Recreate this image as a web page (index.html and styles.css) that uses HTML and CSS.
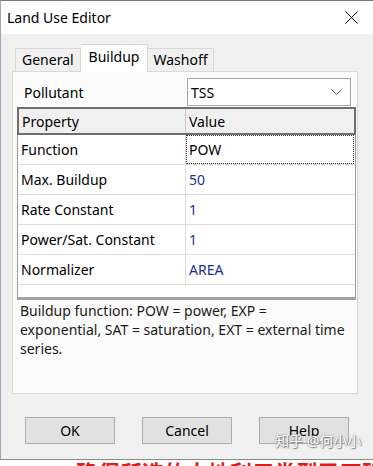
FILE: index.html
```html
<!DOCTYPE html>
<html lang="en">
<head>
  <meta charset="UTF-8" />
  <meta name="viewport" content="width=device-width, initial-scale=1.0"/>
  <title>Land Use Editor</title>
  <link rel="stylesheet" href="styles.css">
</head>
<body>

  <div class="window">
    <div class="titlebar">
      <span class="title">Land Use Editor</span>
      <svg class="close" width="13" height="13" viewBox="0 0 13 13">
        <path d="M0.5 0.5 L12.5 12.5 M12.5 0.5 L0.5 12.5" stroke="#000" stroke-width="1" fill="none"/>
      </svg>
    </div>

    <div class="client">
      <div class="tabs">
        <div class="tab">General</div>
        <div class="tab active">Buildup</div>
        <div class="tab last">Washoff</div>
      </div>

      <div class="panel">
        <div class="pollutant-row">
          <div class="pollutant-label">Pollutant</div>
          <div class="combo">
            <span>TSS</span>
            <svg width="11" height="7" viewBox="0 0 11 7">
              <path d="M0.5 0.5 L5.5 5.5 L10.5 0.5" stroke="#555" stroke-width="1" fill="none"/>
            </svg>
          </div>
        </div>

        <div class="grid">
          <div class="row head">
            <div class="cell">Property</div>
            <div class="cell">Value</div>
          </div>
          <div class="row">
            <div class="cell">Function</div>
            <div class="cell focus">POW</div>
          </div>
          <div class="row">
            <div class="cell">Max. Buildup</div>
            <div class="cell val">50</div>
          </div>
          <div class="row">
            <div class="cell">Rate Constant</div>
            <div class="cell val">1</div>
          </div>
          <div class="row">
            <div class="cell">Power/Sat. Constant</div>
            <div class="cell val">1</div>
          </div>
          <div class="row">
            <div class="cell">Normalizer</div>
            <div class="cell val">AREA</div>
          </div>
          <div class="grid-rest"></div>
        </div>

        <div class="desc">Buildup function: POW = power, EXP = exponential, SAT = saturation, EXT = external time series.</div>
      </div>

      <div class="buttons">
        <button>OK</button>
        <button>Cancel</button>
        <button>Help</button>
        <div class="watermark">知乎 @何小小</div>
      </div>
    </div>
  </div>
  <div class="behind"><span>确保所选的土地利用类型已正确设置</span></div>

</body>
</html>
```

FILE: styles.css
```css
body {
  margin: 0;
  width: 373px;
  height: 466px;
  overflow: hidden;
  background: #fff;
  font-family: "Noto Sans", "Noto Sans CJK SC", sans-serif;
  font-size: 14px;
  color: #000;
}
.window {
  height: 458px;
  border-top: 1px solid #7a7a7a;
  border-left: 1px solid #9aa6b6;
  border-bottom: 1px solid #8a8a8a;
  display: flex;
  flex-direction: column;
  background: #f0f0f0;
}
.titlebar {
  height: 33px;
  background: #fff;
  display: flex;
  align-items: center;
  justify-content: space-between;
  padding: 0 15px 0 6px;
}
.title {
  font-size: 14px;
}
.client {
  flex: 1;
  position: relative;
  padding: 10px 15px 0 11px;
}
.tabs {
  display: flex;
  align-items: flex-end;
  height: 27px;
  padding-left: 3px;
  position: relative;
  z-index: 1;
}
.tab {
  height: 22px;
  line-height: 22px;
  padding: 0 6px;
  border: 1px solid #d9d9d9;
  border-bottom: none;
  background: #f0f0f0;
}
.tab.active {
  height: 27px;
  line-height: 24px;
  padding: 0 8px;
  background: #fff;
  border-left: none;
  margin-bottom: -1px;
}
.tab.last {
  border-left: none;
  padding: 0 5px;
}
.panel {
  height: 316px;
  border: 1px solid #d9d9d9;
  background: #fbfbfb;
  padding: 5px 0 0 4px;
}
.pollutant-row {
  display: flex;
  align-items: center;
  height: 30px;
}
.pollutant-label {
  width: 170px;
  box-sizing: border-box;
  padding-left: 7px;
}
.combo {
  width: 164px;
  height: 28px;
  border: 1px solid #a6a6a6;
  background: #fff;
  display: flex;
  align-items: center;
  justify-content: space-between;
  padding: 0 8px 0 3px;
  box-sizing: border-box;
}
.grid {
  width: 339px;
  box-sizing: border-box;
  background: #fff;
  border: 1px solid #9c9c9c;
  border-top: none;
  border-bottom: 3px solid #a3a3a3;
}
.row {
  display: flex;
  height: 30px;
  border-bottom: 1px solid #dcdcdc;
  box-sizing: border-box;
}
.row.head {
  height: 28px;
  background: #f0f0f0;
  border: 2px solid #6e6e6e;
  margin: 0 -1px;
}
.cell {
  display: flex;
  align-items: center;
  padding-left: 3px;
  box-sizing: border-box;
}
.cell:first-child {
  width: 168px;
  border-right: 1px solid #dcdcdc;
}
.row.head .cell:first-child {
  width: 167px;
  border-right-color: #c8c8c8;
}
.cell:last-child {
  flex: 1;
}
.cell.focus {
  border: 1px dotted #333;
  margin-right: 1px;
  padding-left: 2px;
}
.val {
  color: #20308e;
}
.grid-rest {
  height: 12px;
}
.desc {
  margin: 1px 6px 0 3px;
  line-height: 19px;
  color: #1a1a1a;
}
.buttons {
  display: flex;
  gap: 27px;
  padding: 23px 0 0 13px;
  position: relative;
}
button {
  width: 90px;
  height: 27px;
  background: #e1e1e1;
  border: 1px solid #adadad;
  font-family: "Noto Sans", sans-serif;
  font-size: 14px;
  color: #000;
  padding: 0;
}
.watermark {
  position: absolute;
  left: 263px;
  top: 36px;
  font-size: 14px;
  color: #fff;
  text-shadow: 0 0 2px #777, 1px 1px 1px #888;
  white-space: nowrap;
}
.behind {
  height: 7px;
  margin-left: 76px;
  overflow: hidden;
}
.behind span {
  display: block;
  margin-top: 1px;
  font-size: 22px;
  font-weight: bold;
  color: #d81e1e;
  white-space: nowrap;
  line-height: 22px;
}
```
